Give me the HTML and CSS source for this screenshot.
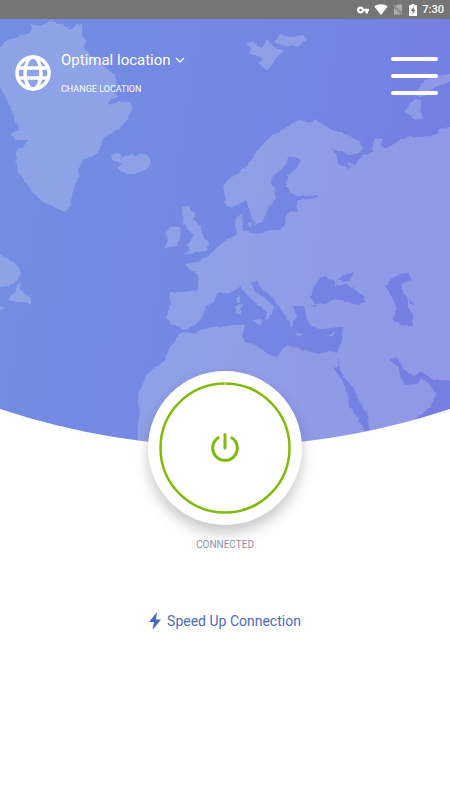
FILE: index.html
```html
<!DOCTYPE html>
<html lang="en">
<head>
    <meta charset="UTF-8">
    <meta name="viewport" content="width=device-width, initial-scale=1.0">
    <title>VPN</title>
    <link rel="stylesheet" href="styles.css">
</head>
<body>
    <div class="status-bar">
        <svg class="status-key" viewBox="0 0 12 8" aria-hidden="true">
            <path fill-rule="evenodd" d="M3.5 0.5a3.5 3.5 0 1 0 3.3 4.7H8.500V7.500H11V5.200H12V2.800H6.800A3.500 3.500 0 0 0 3.500 0.500zM3.500 2.800a1.200 1.200 0 1 1 0 2.400a1.200 1.200 0 0 1 0-2.400z"/>
        </svg>
        <svg class="status-wifi" viewBox="0 0 14 11" aria-hidden="true">
            <path d="M7 11L0.300 2.500C4-0.600 10-0.600 13.700 2.500z"/>
        </svg>
        <svg class="status-sim" viewBox="0 0 10 11" aria-hidden="true">
            <path d="M4 0.500H9V8L2.500 2zM1 3.500L8 10.500H1z"/>
            <path d="M0.500 0.800L9.500 10.500" fill="none" stroke="#fff"/>
        </svg>
        <svg class="status-battery" viewBox="0 0 8 12" aria-hidden="true">
            <path fill-rule="evenodd" d="M2.500 0h3v1.200H8V12H0V1.200h2.500zM4.800 2.600L1.800 7H3.600V10.200L6.400 5.800H4.800z"/>
        </svg>
        <span class="status-time">7:30</span>
    </div>

    <header class="hero">
        <svg class="map" viewBox="0 19 450 428" aria-hidden="true">
            <defs>
                <linearGradient id="sea" x1="0" y1="0" x2="1" y2="0.15">
                    <stop offset="0" stop-color="#728ee2"/>
                    <stop offset="0.5" stop-color="#7488e3"/>
                    <stop offset="1" stop-color="#757fe2"/>
                </linearGradient>
                <filter id="coast" x="0" y="0" width="1" height="1">
                    <feTurbulence type="fractalNoise" baseFrequency="0.2" numOctaves="2" seed="4"/>
                    <feDisplacementMap in="SourceGraphic" scale="3" xChannelSelector="R" yChannelSelector="G"/>
                </filter>
                <clipPath id="curve">
                    <path d="M0 19H450V409Q225 483 0 409z"/>
                </clipPath>
                <mask id="land" maskUnits="userSpaceOnUse" x="-10" y="0" width="470" height="470">
                    <g filter="url(#coast)">
                        <rect x="-20" y="0" width="490" height="480" fill="#000"/>
                        <g fill="#fff">
                            <!-- Greenland -->
                            <path d="M-9 50L0 47L7 40L18 37L30 33L32 25L41 26L50 21L62 24L70 30L77 24L82 25L82 36L86 40L84 48L90 55L100 62L108 70L115 75L117 85L110 90L118 96L108 102L109 105L120 101L130 102L132 108L127 120L118 130L108 135L102 140L100 150L92 157L83 160L78 170L80 176L75 185L72 195L71 205L65 212L55 207L45 203L35 195L30 188L24 180L18 172L16 160L17 150L25 145L27 140L15 140L12 133L20 130L15 122L12 112L7 100L2 90L-9 75z"/>
                            <!-- Iceland -->
                            <path d="M111 156L115 153L121 154L120 158L130 155L137 156L140 153L148 155L151 162L148 168L140 172L133 174L122 172L117 168L122 164L112 160z"/>
                            <!-- Svalbard -->
                            <path d="M246 44L253 41L258 46L263 47L267 39L274 47L284 51L277 56L273 63L268 70L261 66L258 62L263 60L257 56L251 54L250 48z"/>
                            <path d="M275 41L280 34L290 37L303 35L307 40L298 46L286 46L278 44z"/>
                            <!-- Novaya Zemlya -->
                            <path d="M460 72L438 76L425 80L420 87L414 95L425 97L430 90L440 85L460 78z"/>
                            <path d="M415 99L422 100L420 110L424 118L416 120L410 115L404 112L409 105z"/>
                            <!-- Newfoundland -->
                            <path d="M-9 250L0 254L8 259L18 266L21 273L18 280L8 286L-9 288z"/>
                            <path d="M20 280L16 290L8 300L15 302L25 302L31 305L31 298L25 294L20 290z"/>
                            <path d="M-5 304L5 308L-5 313z"/>
                            <!-- Britain and Ireland -->
                            <path d="M183 207L190 206L190 211L196 212L193 219L200 226L204 238L209 243L207 251L195 252L184 255L190 249L186 245L191 240L193 234L188 230L183 222L182 213z"/>
                            <path d="M165 233L171 227L180 227L181 238L177 245L166 248L168 240z"/>
                            <!-- Europe, Asia and Africa -->
                            <path d="M300 120L290 125L280 131L272 135L262 145L254 155L248 165L240 172L230 178L223 186L225 196L225 203L232 208L240 203L246 200L250 212L255 225L262 222L267 212L269 205L276 198L274 193L277 190L271 185L271 178L278 172L286 165L288 158L294 157L301 160L297 168L288 175L287 185L290 192L298 197L307 196L318 195L318 197L308 199L298 200L297 205L297 212L290 211L286 215L285 225L280 230L270 230L258 234L248 232L243 230L242 222L243 213L236 217L235 225L237 235L225 240L215 250L205 258L197 262L186 264L187 268L195 271L198 280L198 290L185 292L170 292L170 305L167 315L170 324L178 326L183 330L195 325L202 318L205 308L215 300L217 293L230 293L240 287L248 295L258 305L268 313L265 320L268 320L272 310L275 308L265 298L255 292L251 283L256 281L263 290L275 300L282 310L288 320L293 328L293 321L297 317L293 306L304 306L307 318L310 325L320 329L330 328L343 327L341 340L337 353L330 351L318 354L305 350L295 348L288 345L281 350L278 357L270 355L258 346L245 342L242 337L245 325L235 325L215 327L200 330L195 334L183 332L179 334L175 342L168 350L165 360L155 368L147 375L140 390L137 400L140 410L138 425L137 460H470V128L450 128L439 129L438 133L433 136L420 137L410 136L398 141L388 148L380 145L383 139L375 138L373 145L373 152L365 154L360 158L355 165L346 162L351 167L348 169L338 164L337 155L330 148L338 151L350 155L360 153L363 148L358 141L345 134L332 130L322 124L315 119L310 123z"/>
                            <!-- Mediterranean and Danish islands -->
                            <path d="M237 297L240 295L240 302L237 303zM236 305L242 304L241 314L236 315zM252 320L262 319L261 326zM286 318L294 318L292 326zM294 333L305 334L299 336zM328 336L335 331L333 336zM247 223L252 222L251 227z"/>
                        </g>
                        <!-- Black Sea, Azov, Caspian, Red Sea, Persian Gulf -->
                        <g fill="#000">
                            <path d="M311 298L313 288L320 278L326 275L329 279L334 280L335 287L345 284L353 288L363 296L365 302L358 305L345 301L335 299L325 304L315 303z"/>
                            <path d="M337 279L345 275L354 272L350 280L345 282zM308 306L316 305L317 307z"/>
                            <path d="M386 286L391 279L400 274L409 273L410 280L402 285L403 292L408 299L408 307L413 315L413 326L402 326L393 320L397 308L394 302zM409 298L415 305L410 305z"/>
                            <path d="M329 360L333 367L337 368L339 358L340 370L346 380L354 388L358 399L368 416L370 434L365 432L358 418L349 407L348 395L342 380L335 370z"/>
                            <path d="M389 360L395 357L400 361L403 369L414 376L421 372L425 374L433 380L470 381V425H405L425 412L430 406L436 394L430 385L422 378L416 384L405 385L401 378L398 367z"/>
                        </g>
                    </g>
                </mask>
            </defs>
            <g clip-path="url(#curve)">
                <rect y="19" width="450" height="430" fill="url(#sea)"/>
                <rect y="19" width="450" height="430" fill="#fff" fill-opacity="0.2" mask="url(#land)"/>
            </g>
        </svg>

        <div class="top-bar">
            <button class="location" type="button">
                <svg class="globe" viewBox="0 0 36 36" aria-hidden="true">
                    <circle cx="18" cy="18" r="16"/>
                    <ellipse cx="18" cy="18" rx="8" ry="16"/>
                    <path d="M3 13H33M3 23H33"/>
                </svg>
                <span class="location-text">
                    <span class="location-name">
                        Optimal location
                        <svg class="chevron" viewBox="0 0 10 6" aria-hidden="true">
                            <path d="M1 1L5 5L9 1"/>
                        </svg>
                    </span>
                    <span class="location-change">CHANGE LOCATION</span>
                </span>
            </button>
            <button class="menu" type="button" aria-label="Menu">
                <span></span>
                <span></span>
                <span></span>
            </button>
        </div>
    </header>

    <main class="connection">
        <button class="power" type="button" aria-label="Disconnect">
            <svg viewBox="0 0 154 154" aria-hidden="true">
                <circle cx="77" cy="77" r="64.500" stroke-width="2.500"/>
                <path d="M77 11V14" stroke="#d5ebab" stroke-width="1"/>
                <path d="M70.200 66.800A12.300 12.300 0 1 0 83.800 66.800" stroke-width="3" stroke-linecap="round"/>
                <path d="M77 63.500V77" stroke-width="3" stroke-linecap="round"/>
            </svg>
        </button>
        <p class="status">CONNECTED</p>
        <a href="#" class="speed-up">
            <svg viewBox="0 0 12 18" aria-hidden="true">
                <path d="M8 0L0 10H5L3.500 18L12 7.500H7z"/>
            </svg>
            Speed Up Connection
        </a>
    </main>
</body>
</html>
```
FILE: styles.css
```css
* {
    margin: 0;
    padding: 0;
    box-sizing: border-box;
}

body {
    font-family: Roboto, Arial, sans-serif;
    background: #fff;
}

button {
    background: none;
    border: none;
    color: inherit;
    font-family: inherit;
    cursor: pointer;
}

.status-bar {
    display: flex;
    justify-content: flex-end;
    align-items: center;
    height: 19px;
    padding: 0 6px;
    background: #757575;
    color: #fff;
}

.status-bar svg {
    fill: #fff;
}

.status-key {
    width: 12px;
    height: 8px;
    margin-right: 5px;
}

.status-wifi {
    width: 14px;
    height: 11px;
    margin-right: 5px;
}

.status-sim {
    width: 10px;
    height: 11px;
    margin-right: 6px;
    opacity: 0.4;
}

.status-battery {
    width: 8px;
    height: 12px;
    margin-right: 5px;
}

.status-time {
    font-size: 11px;
    font-weight: 500;
}

/* Map and top bar share one grid cell */
.hero {
    display: grid;
    color: #fff;
}

.hero > * {
    grid-area: 1 / 1;
}

.map {
    display: block;
    width: 100%;
}

.top-bar {
    display: flex;
    justify-content: space-between;
    align-items: flex-start;
    padding: 32px 12px 0 15px;
}

.location {
    display: flex;
    align-items: center;
    gap: 10px;
    text-align: left;
}

.globe {
    width: 36px;
    height: 36px;
    fill: none;
    stroke: #fff;
    stroke-width: 3.5;
}

.location-text {
    display: flex;
    flex-direction: column;
    gap: 14px;
}

.location-name {
    display: flex;
    align-items: center;
    gap: 4px;
    font-size: 15px;
    line-height: 18px;
}

.chevron {
    width: 10px;
    height: 6px;
    fill: none;
    stroke: #fff;
    stroke-width: 1.3;
}

.location-change {
    font-size: 9px;
    line-height: 12px;
}

.menu {
    display: flex;
    flex-direction: column;
    gap: 13px;
    padding-top: 6px;
}

.menu span {
    width: 47px;
    height: 4px;
    border-radius: 2px;
    background: #fff;
}

.connection {
    display: flex;
    flex-direction: column;
    align-items: center;
}

.power {
    width: 154px;
    height: 154px;
    margin-top: -76px;
    border-radius: 50%;
    background: #fff;
    box-shadow: 0 8px 14px rgba(0, 0, 0, 0.22);
    z-index: 1;
}

.power svg {
    display: block;
    fill: none;
    stroke: #80bb0c;
}

.status {
    margin-top: 13px;
    font-size: 10px;
    line-height: 14px;
    color: #8b93ab;
}

.speed-up {
    display: flex;
    align-items: center;
    gap: 6px;
    margin-top: 58px;
    font-size: 14px;
    line-height: 22px;
    color: #4a6bbd;
    text-decoration: none;
}

.speed-up svg {
    width: 12px;
    height: 18px;
    fill: #4a6bbd;
}
```
